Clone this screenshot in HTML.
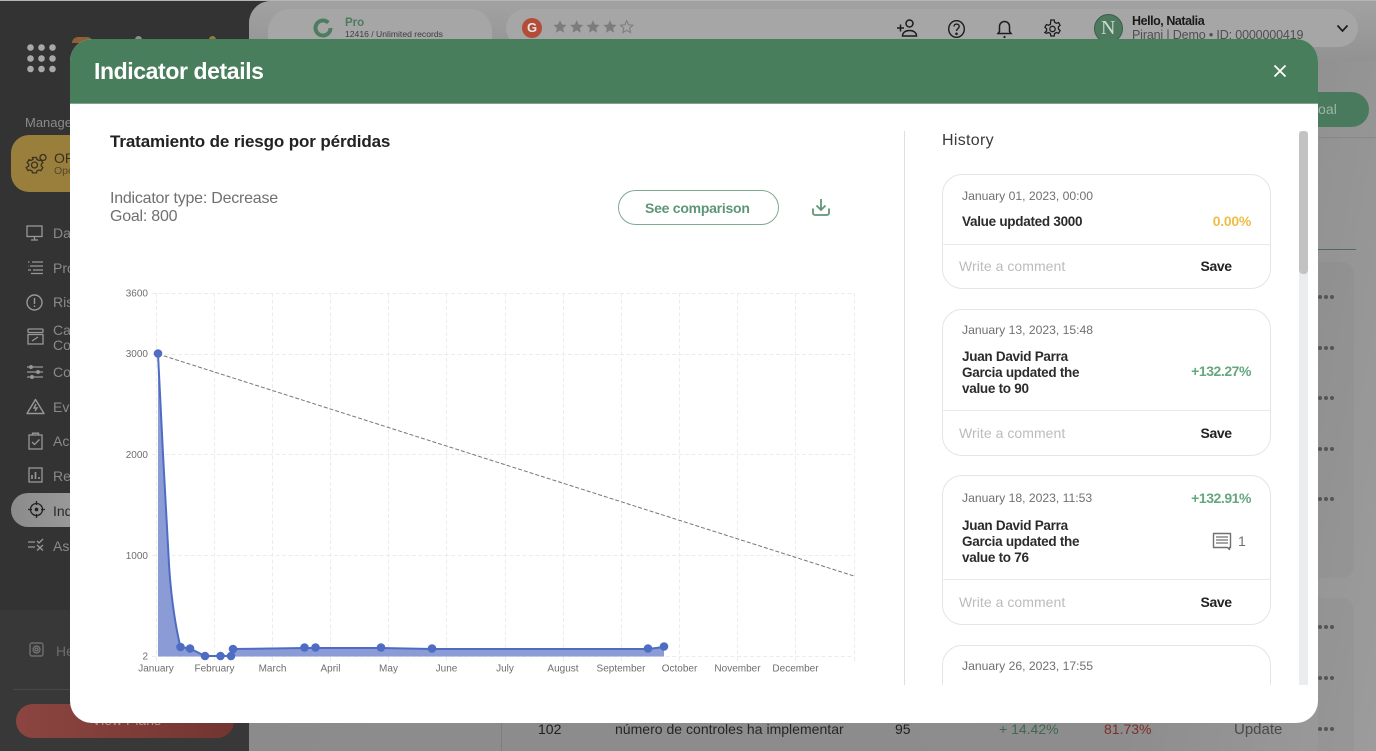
<!DOCTYPE html>
<html>
<head>
<meta charset="utf-8">
<style>
html,body{margin:0;padding:0;width:1376px;height:751px;overflow:hidden;background:#8c8c8c}
body{font-family:"Liberation Sans",sans-serif;position:relative}
.a{position:absolute;white-space:nowrap}
svg{position:absolute;overflow:visible}
#bg{position:absolute;left:0;top:0;width:1376px;height:751px;overflow:hidden;background:#333}
.dim{color:#8a8a8a;font-size:14px}
.card{position:absolute;width:327px;border:1px solid #e4e5e8;border-radius:20px;background:#fff}
.date{color:#707070;font-size:12.2px;letter-spacing:-.02px}
.bold{color:#2b2b2b;font-size:13.5px;font-weight:bold;line-height:16px;letter-spacing:-.28px}
.ph{color:#bcbcbc;font-size:14px;letter-spacing:.05px}
.save{color:#222;font-size:14px;font-weight:bold;letter-spacing:-.4px}
.g{color:#65a77f;font-size:14px;font-weight:bold;letter-spacing:-.45px}
.dots{position:absolute;left:1318px;width:16px;height:4px}
.dots i{position:absolute;top:0;width:4px;height:4px;border-radius:50%;background:#555}
.dots i:nth-child(1){left:0}.dots i:nth-child(2){left:6px}.dots i:nth-child(3){left:12px}
.lab{font-family:"Liberation Sans",sans-serif;font-size:10px;fill:#6e6e6e}
.hr{position:absolute;left:12px;width:329px;height:1px;background:#e8e9eb}
</style>
</head>
<body>
<div id="bg">
  <!-- main area -->
  <div style="position:absolute;left:249px;top:1px;width:1127px;height:750px;border-radius:22px 0 0 0;background:linear-gradient(100deg,#8b8b8b 0%,#8d8d8d 80%,#9c9c9c 100%)"></div>
  <div style="position:absolute;left:249px;top:1px;width:1127px;height:60px;border-radius:22px 0 0 0;background:linear-gradient(180deg,#a2a2a2,#929292)"></div>
  <div style="position:absolute;left:0;top:0;width:1376px;height:1px;background:#b5b5b5"></div>
  <div style="position:absolute;left:268px;top:9px;width:224px;height:50px;border-radius:22px;background:#a6a6a6"></div>
  <div style="position:absolute;left:506px;top:9px;width:852px;height:38px;border-radius:20px;background:#a6a6a6"></div>

  <svg style="left:313px;top:18px" width="20" height="20" viewBox="0 0 20 20"><path d="M15.300 4.700A7.500 7.500 0 1 0 17.500 10" fill="none" stroke="#4d7d60" stroke-width="4"/></svg>
  <div class="a" style="left:345px;top:17px;font-size:11.500px;font-weight:bold;color:#4e7a60">Pro</div>
  <div class="a" style="left:345px;top:29px;font-size:8.600px;color:#3c3c3c">12416 / Unlimited records</div>

  <div style="position:absolute;left:522px;top:18px;width:20px;height:20px;border-radius:50%;background:#b44c3a"></div>
  <div class="a" style="left:527px;top:20px;font-size:13px;font-weight:bold;color:#e6e6e6">G</div>
  <svg style="left:0;top:0" width="700" height="40" viewBox="0 0 700 40">
    <g fill="#7c7c7c">
      <path id="s1" d="M560 20.200l1.900 4.300 4.700.5-3.500 3.100 1 4.600-4.100-2.400-4.100 2.400 1-4.600-3.500-3.100 4.700-.5z"/>
      <path d="M576.700 20.200l1.900 4.300 4.700.5-3.500 3.100 1 4.600-4.100-2.400-4.100 2.400 1-4.600-3.500-3.100 4.700-.5z"/>
      <path d="M593 20.200l1.900 4.300 4.700.5-3.500 3.100 1 4.600-4.100-2.400-4.100 2.400 1-4.600-3.500-3.100 4.700-.5z"/>
      <path d="M610 20.200l1.900 4.300 4.700.5-3.500 3.100 1 4.600-4.100-2.400-4.100 2.400 1-4.600-3.500-3.100 4.700-.5z"/>
    </g>
    <path d="M626.700 20.700l1.800 4.100 4.400.5-3.300 2.900 1 4.400-3.900-2.300-3.900 2.300 1-4.400-3.300-2.900 4.400-.5z" fill="none" stroke="#7c7c7c" stroke-width="1"/>
  </svg>

  <!-- top icons -->
  <svg style="left:895px;top:18px" width="24" height="20" viewBox="0 0 24 20" fill="none" stroke="#1c1c1c" stroke-width="1.500"><path d="M2 10h7M5.500 6.500v7"/><circle cx="14.500" cy="5.500" r="3.500"/><path d="M7.500 18c0-3.500 3-5.500 7-5.500s7 2 7 5.500z"/></svg>
  <svg style="left:948px;top:19px" width="18" height="20" viewBox="0 0 18 20" fill="none" stroke="#1c1c1c" stroke-width="1.400"><ellipse cx="8.500" cy="10" rx="7.800" ry="8.300"/><path d="M6 7.500c0-3.300 5.200-3.300 5.200 0 0 2-2.700 2.300-2.700 4.500"/><circle cx="8.500" cy="14.800" r=".6" fill="#1c1c1c"/></svg>
  <svg style="left:996px;top:19px" width="17" height="20" viewBox="0 0 17 20" fill="none" stroke="#1c1c1c" stroke-width="1.500"><path d="M2 14.500h13l-1.500-2V7.500a5 5 0 0 0-10 0v5z"/><circle cx="8.500" cy="18" r="1.100" fill="#1c1c1c" stroke="none"/></svg>
  <svg style="left:1044px;top:19px" width="17" height="19" viewBox="0 0 17 19" fill="none" stroke="#1c1c1c" stroke-width="1.300"><path d="M6.800 1h3.400l.4 2.300 1.800 1 2.200-.8 1.500 2.800-1.700 1.500v2.200l1.700 1.500-1.500 2.800-2.200-.8-1.800 1-.4 2.500H6.800l-.4-2.500-1.800-1-2.200.8L.9 13.500l1.700-1.500V9.800L.9 8.300l1.500-2.800 2.200.8 1.800-1z"/><circle cx="8.500" cy="10" r="2.700"/></svg>
  <div style="position:absolute;left:1094px;top:14px;width:29px;height:29px;border-radius:50%;background:#4d7a5f;border:1px solid #3a5d49;box-sizing:border-box"></div>
  <div class="a" style="left:1101px;top:17px;font-family:'Liberation Serif',serif;font-size:20px;color:#cfd8d2">N</div>
  <div class="a" style="left:1132px;top:14px;font-size:12.500px;font-weight:bold;color:#1a1a1a;letter-spacing:-.45px">Hello, Natalia</div>
  <div class="a" style="left:1132px;top:28px;font-size:12.500px;color:#4f4f4f;letter-spacing:-.15px">Pirani | Demo • ID: 0000000419</div>
  <svg style="left:1336px;top:24px" width="13" height="9" viewBox="0 0 13 9" fill="none" stroke="#1c1c1c" stroke-width="1.700"><path d="M1.500 1.500L6.500 7l5-5.500"/></svg>

  <!-- goal button -->
  <div style="position:absolute;left:1250px;top:92px;width:119px;height:35px;border-radius:18px;background:#4a7a5d"></div>
  <div class="a" style="left:1318px;top:101px;font-size:14px;color:#9fb5a8;letter-spacing:.1px">oal</div>
  <div style="position:absolute;left:1318px;top:137px;width:58px;height:1px;background:#878787"></div>
  <div style="position:absolute;left:1318px;top:249px;width:38px;height:1px;background:#4d6d59"></div>
  <div style="position:absolute;left:1318px;top:262px;width:36px;height:316px;border-radius:0 12px 12px 0;background:rgba(0,0,0,.025)"></div>
  <div style="position:absolute;left:1318px;top:598px;width:36px;height:153px;border-radius:0 12px 0 0;background:rgba(0,0,0,.025)"></div>
  <div class="dots" style="top:295px"><i></i><i></i><i></i></div>
  <div class="dots" style="top:346px"><i></i><i></i><i></i></div>
  <div class="dots" style="top:396px"><i></i><i></i><i></i></div>
  <div class="dots" style="top:447px"><i></i><i></i><i></i></div>
  <div class="dots" style="top:497px"><i></i><i></i><i></i></div>
  <div class="dots" style="top:625px"><i></i><i></i><i></i></div>
  <div class="dots" style="top:676px"><i></i><i></i><i></i></div>
  <div class="dots" style="top:727px"><i></i><i></i><i></i></div>

  <!-- table last row -->
  <div style="position:absolute;left:501px;top:723px;width:1px;height:28px;background:#7d7d7d"></div>
  <div class="a" style="left:538px;top:721px;font-size:14px;color:#1f1f1f">102</div>
  <div class="a" style="left:615px;top:721px;font-size:14px;color:#262626;letter-spacing:.02px">número de controles ha implementar</div>
  <div class="a" style="left:895px;top:721px;font-size:14px;color:#1f1f1f">95</div>
  <div class="a" style="left:999px;top:721px;font-size:14px;color:#3e6a50">+ 14.42%</div>
  <div class="a" style="left:1104px;top:721px;font-size:14px;color:#7e2e2c">81.73%</div>
  <div class="a" style="left:1234px;top:721px;font-size:15px;color:#4a4a4a">Update</div>

  <!-- sidebar -->
  <div style="position:absolute;left:0;top:610px;width:249px;height:141px;background:#383838"></div>
  <div style="position:absolute;left:13px;top:689px;width:222px;height:1px;background:#484848"></div>
  <div style="position:absolute;left:16px;top:704px;width:218px;height:34px;border-radius:17px;background:linear-gradient(90deg,#8c4540,#733530)"></div>
  <svg style="left:27px;top:44px" width="29" height="29"><g fill="#a8a8a8"><circle cx="3.500" cy="3.500" r="3.300"/><circle cx="14.500" cy="3.500" r="3.300"/><circle cx="25.500" cy="3.500" r="3.300"/><circle cx="3.500" cy="14.500" r="3.300"/><circle cx="14.500" cy="14.500" r="3.300"/><circle cx="25.500" cy="14.500" r="3.300"/><circle cx="3.500" cy="25" r="3.300"/><circle cx="14.500" cy="25" r="3.300"/><circle cx="25.500" cy="25" r="3.300"/></g></svg>
  <div class="a" style="left:25px;top:115px;font-size:13px;color:#8a8a8a">Manage</div>
  <div style="position:absolute;left:11px;top:135px;width:100px;height:57px;border-radius:18px;background:#9a7e3c"></div>
  <svg style="left:25px;top:153px" width="22" height="22" viewBox="0 0 22 22" fill="none" stroke="#3a3220" stroke-width="1.300"><circle cx="9.500" cy="12" r="3"/><path d="M7.500 4.500h4l.5 2 2 1 2-.7 1.800 3-1.500 1.500v1.800l1.500 1.500-1.800 3-2-.7-2 1-.5 2h-4l-.5-2-2-1-2 .7-1.800-3L3.700 13v-1.800L2.200 9.700 4 6.700l2 .7 2-1z"/><circle cx="18" cy="4.500" r="3"/></svg>
  <div class="a" style="left:54px;top:150px;font-size:14px;color:#372f1e">OR</div>
  <div class="a" style="left:54px;top:165px;font-size:10.500px;color:#54492f">Ope</div>

  <!-- nav icons -->
  <svg style="left:26px;top:224px" width="18" height="18" viewBox="0 0 18 18" fill="none" stroke="#989898" stroke-width="1.300"><rect x="1" y="2" width="15" height="10.500"/><path d="M8.500 12.500V16M5 16h7"/></svg>
  <svg style="left:27px;top:260px" width="18" height="15" viewBox="0 0 18 15" fill="none" stroke="#989898" stroke-width="1.300"><path d="M5 2h11M3 6h13M6 10h10M4 13.500h12M1 2h1.500M1 6h.5M1 10h3"/></svg>
  <svg style="left:26px;top:294px" width="17" height="17" viewBox="0 0 17 17" fill="none" stroke="#989898" stroke-width="1.400"><circle cx="8.500" cy="8.500" r="7.500"/><path d="M8.500 4v6M8.500 11.500v1.500"/></svg>
  <svg style="left:27px;top:328px" width="17" height="17" viewBox="0 0 17 17" fill="none" stroke="#989898" stroke-width="1.300"><rect x="1" y="1" width="15" height="3.500" rx="1"/><rect x="1" y="6.500" width="15" height="9.500"/><path d="M5 13l6-4"/></svg>
  <svg style="left:27px;top:364px" width="16" height="15" viewBox="0 0 16 15" fill="none" stroke="#989898" stroke-width="1.300"><path d="M0 3h16M0 8h16M0 13h16"/><circle cx="4" cy="3" r="1.300" fill="#989898"/><circle cx="11" cy="8" r="1.300" fill="#989898"/><circle cx="5" cy="13" r="1.300" fill="#989898"/></svg>
  <svg style="left:26px;top:398px" width="19" height="17" viewBox="0 0 19 17" fill="none" stroke="#989898" stroke-width="1.400"><path d="M9.500 1.500L18 15.500H1z" stroke-linejoin="round"/><path d="M10 6l-2 4h3l-2 3"/></svg>
  <svg style="left:28px;top:432px" width="15" height="18" viewBox="0 0 15 18" fill="none" stroke="#989898" stroke-width="1.300"><rect x="1" y="3" width="13" height="14"/><path d="M4.500 3V1.200h6V3M4 10l2.500 2.500 5-5"/></svg>
  <svg style="left:28px;top:467px" width="15" height="16" viewBox="0 0 15 16" fill="none" stroke="#989898" stroke-width="1.300"><rect x="1" y="1" width="13" height="14"/><path d="M4 12V8M7.500 12V5M11 12v-2" stroke-width="1.600"/></svg>
  <div style="position:absolute;left:11px;top:493px;width:100px;height:34px;border-radius:17px 0 0 17px;background:linear-gradient(90deg,#8b8b8b,#a2a2a2)"></div>
  <svg style="left:28px;top:501px" width="17" height="17" viewBox="0 0 17 17" fill="none" stroke="#222" stroke-width="1.300"><circle cx="8.500" cy="8.500" r="6"/><path d="M8.500 0v4M8.500 13v4M0 8.500h4M13 8.500h4"/><circle cx="8.500" cy="8.500" r="1.200" fill="#222"/></svg>
  <svg style="left:28px;top:538px" width="17" height="13" viewBox="0 0 17 13" fill="none" stroke="#989898" stroke-width="1.300"><path d="M0 4h7M0 9h7M9 7l6 5.500M15 7l-6 5.500M9 3l2 2 4-4"/></svg>
  <svg style="left:29px;top:642px" width="15" height="15" viewBox="0 0 15 15" fill="none" stroke="#777" stroke-width="1.200"><rect x="1" y="1" width="13" height="13" rx="2"/><circle cx="7.500" cy="7.500" r="3.500"/><circle cx="7.500" cy="7.500" r="1.500"/></svg>

  <div class="a dim" style="left:53px;top:225px">Da</div>
  <div class="a dim" style="left:53px;top:260px">Pro</div>
  <div class="a dim" style="left:53px;top:294px">Ris</div>
  <div class="a dim" style="left:53px;top:322px">Ca</div>
  <div class="a dim" style="left:53px;top:337px">Co</div>
  <div class="a dim" style="left:53px;top:364px">Co</div>
  <div class="a dim" style="left:53px;top:399px">Eve</div>
  <div class="a dim" style="left:53px;top:433px">Ac</div>
  <div class="a dim" style="left:53px;top:468px">Re</div>
  <div class="a" style="left:53px;top:503px;font-size:14px;color:#2a2a2a">Ind</div>
  <div class="a dim" style="left:53px;top:538px">As</div>
  <div class="a" style="left:56px;top:643px;font-size:14px;color:#6c6c6c">He</div>
  <div style="position:absolute;left:72px;top:37px;width:21px;height:6px;border-radius:8px 8px 0 0;background:#8f6038"></div>
  <div style="position:absolute;left:135px;top:36px;width:7px;height:5px;border-radius:4px 4px 0 0;background:#8e8e8e"></div>
  <div style="position:absolute;left:209px;top:36px;width:7px;height:5px;border-radius:4px 4px 0 0;background:#94793a"></div>
  <div class="a" style="left:92px;top:712px;font-size:14px;color:#b9928f">View Plans</div>
</div>

<!-- MODAL -->
<div style="position:absolute;left:70px;top:39px;width:1248px;height:684px;border-radius:22px;background:#fff;overflow:hidden">
  <div style="position:absolute;left:0;top:0;width:1248px;height:65px;background:#497e5d;border-bottom:1px solid #7fa68d;box-sizing:border-box"></div>
</div>
<div class="a" style="left:94px;top:58px;font-size:23px;font-weight:bold;color:#fff;letter-spacing:-.4px">Indicator details</div>
<svg style="left:1274px;top:65px" width="12" height="12" viewBox="0 0 12 12" fill="none" stroke="#fff" stroke-width="1.800"><path d="M.5.500l11 11M11.500.500l-11 11"/></svg>

<div class="a" style="left:110px;top:132px;font-size:17px;font-weight:bold;color:#222;letter-spacing:-.12px">Tratamiento de riesgo por pérdidas</div>
<div class="a" style="left:110px;top:190px;font-size:16px;line-height:18px;color:#707070;letter-spacing:-.23px">Indicator type: Decrease<br>Goal: 800</div>

<div style="position:absolute;left:617.500px;top:190px;width:161px;height:35px;border:1.300px solid #7eaa8f;border-radius:18px;box-sizing:border-box"></div>
<div class="a" style="left:645px;top:200px;font-size:14px;font-weight:bold;color:#5f9577;letter-spacing:-.25px">See comparison</div>
<svg style="left:811px;top:197px" width="20" height="20" viewBox="0 0 20 20" fill="none" stroke="#5f9577" stroke-width="1.800"><path d="M10 2v11M5.500 8.500L10 13l4.500-4.500"/><path d="M2 11.500v4.500a2 2 0 0 0 2 2h12a2 2 0 0 0 2-2v-4.500"/></svg>

<!-- Chart -->
<svg style="left:0;top:0" width="1376" height="751" viewBox="0 0 1376 751">
  <g stroke="#ececec" stroke-width="1" stroke-dasharray="4 2.500" fill="none">
    <path d="M152 293.500H854M152 354.500H854M152 454.500H854M152 555.500H854M152 656.500H854"/>
    <path d="M156.500 293V661M214.500 293V661M272.500 293V661M330.500 293V661M388.500 293V661M446.500 293V661M505.500 293V661M563.500 293V661M621.500 293V661M679.500 293V661M737.500 293V661M795.500 293V661M854.500 293V661"/>
  </g>
  <path d="M158 354L163 454 168.500 555C170 590 175 625 180.500 647L190 648.500 205 656H220.500L231 656 233 649 304.500 648H315.500L381 648 432 649 648 649 664 647V656.500H158Z" fill="#8b9bd6"/>
  <path d="M158 354L163 454 168.500 555C170 590 175 625 180.500 647L190 648.500 205 656H220.500L231 656 233 649 304.500 648H315.500L381 648 432 649 648 649 664 647" fill="none" stroke="#4f6cc4" stroke-width="2" stroke-linejoin="round"/>
  <path d="M158 354L854 576" fill="none" stroke="#777" stroke-width="1" stroke-dasharray="4 2"/>
  <g fill="#4f6cc4">
    <circle cx="158" cy="353.500" r="4.300"/><circle cx="180.500" cy="647" r="4.300"/><circle cx="190" cy="648.500" r="4.300"/><circle cx="205" cy="656" r="4.300"/><circle cx="220.500" cy="656" r="4.300"/><circle cx="231" cy="656" r="4.300"/><circle cx="233" cy="649" r="4.300"/><circle cx="304.500" cy="647.500" r="4.300"/><circle cx="315.500" cy="647.500" r="4.300"/><circle cx="381" cy="647.500" r="4.300"/><circle cx="432" cy="648.500" r="4.300"/><circle cx="648" cy="648.500" r="4.300"/><circle cx="664" cy="646.500" r="4.300"/>
  </g>
  <g class="lab" text-anchor="end">
    <text x="148" y="296.500" class="lab">3600</text>
    <text x="148" y="357" class="lab">3000</text>
    <text x="148" y="458" class="lab">2000</text>
    <text x="148" y="559" class="lab">1000</text>
    <text x="148" y="659.500" class="lab">2</text>
  </g>
  <g class="lab" text-anchor="middle">
    <text x="156" y="671.500" class="lab">January</text>
    <text x="214.500" y="671.500" class="lab">February</text>
    <text x="272.500" y="671.500" class="lab">March</text>
    <text x="330.500" y="671.500" class="lab">April</text>
    <text x="388.500" y="671.500" class="lab">May</text>
    <text x="446.500" y="671.500" class="lab">June</text>
    <text x="505" y="671.500" class="lab">July</text>
    <text x="563" y="671.500" class="lab">August</text>
    <text x="621" y="671.500" class="lab">September</text>
    <text x="679.500" y="671.500" class="lab">October</text>
    <text x="737.500" y="671.500" class="lab">November</text>
    <text x="795.500" y="671.500" class="lab">December</text>
  </g>
</svg>

<div style="position:absolute;left:904px;top:131px;width:1px;height:554px;background:#dedfe2"></div>
<div class="a" style="left:942px;top:132px;font-size:16px;color:#3a3a3a;letter-spacing:.3px">History</div>
<div style="position:absolute;left:1299px;top:131px;width:9px;height:554px;background:#ebecee"></div>
<div style="position:absolute;left:1299px;top:131px;width:9px;height:143px;border-radius:4px;background:#c2c2c2"></div>

<!-- Cards -->
<div style="position:absolute;left:930px;top:160px;width:350px;height:525px;overflow:hidden">
  <div class="card" style="left:12px;top:14px;height:113px"></div>
  <div class="hr" style="top:84px"></div>
  <div class="card" style="left:12px;top:149px;height:145px"></div>
  <div class="hr" style="top:250px"></div>
  <div class="card" style="left:12px;top:315px;height:148px"></div>
  <div class="hr" style="top:419px"></div>
  <div class="card" style="left:12px;top:485px;height:120px"></div>

  <div class="a date" style="left:32px;top:29px">January 01, 2023, 00:00</div>
  <div class="a bold" style="left:32px;top:54px">Value updated 3000</div>
  <div class="a" style="right:29px;top:53px;font-size:14px;font-weight:bold;color:#efbd47;letter-spacing:-.3px">0.00%</div>
  <div class="a ph" style="left:29px;top:98px">Write a comment</div>
  <div class="a save" style="left:270.500px;top:98px">Save</div>

  <div class="a date" style="left:32px;top:163px">January 13, 2023, 15:48</div>
  <div class="a bold" style="left:32px;top:189px">Juan David Parra<br>Garcia updated the<br>value to 90</div>
  <div class="a g" style="right:29px;top:203px">+132.27%</div>
  <div class="a ph" style="left:29px;top:265px">Write a comment</div>
  <div class="a save" style="left:270.500px;top:265px">Save</div>

  <div class="a date" style="left:32px;top:331px">January 18, 2023, 11:53</div>
  <div class="a g" style="right:29px;top:330px">+132.91%</div>
  <div class="a bold" style="left:32px;top:358px">Juan David Parra<br>Garcia updated the<br>value to 76</div>
  <svg style="left:282px;top:372px" width="20" height="19" viewBox="0 0 20 19" fill="none" stroke="#707070" stroke-width="1.400"><path d="M1.500 1.500h17v14h-1v2l-2-2h-14z" stroke-linejoin="round"/><path d="M4 5h12M4 8h12M4 11h12" stroke-width="1.200"/></svg>
  <div class="a" style="left:308px;top:373px;font-size:14px;color:#707070">1</div>
  <div class="a ph" style="left:29px;top:434px">Write a comment</div>
  <div class="a save" style="left:270.500px;top:434px">Save</div>

  <div class="a date" style="left:32px;top:499px">January 26, 2023, 17:55</div>
</div>
</body>
</html>
